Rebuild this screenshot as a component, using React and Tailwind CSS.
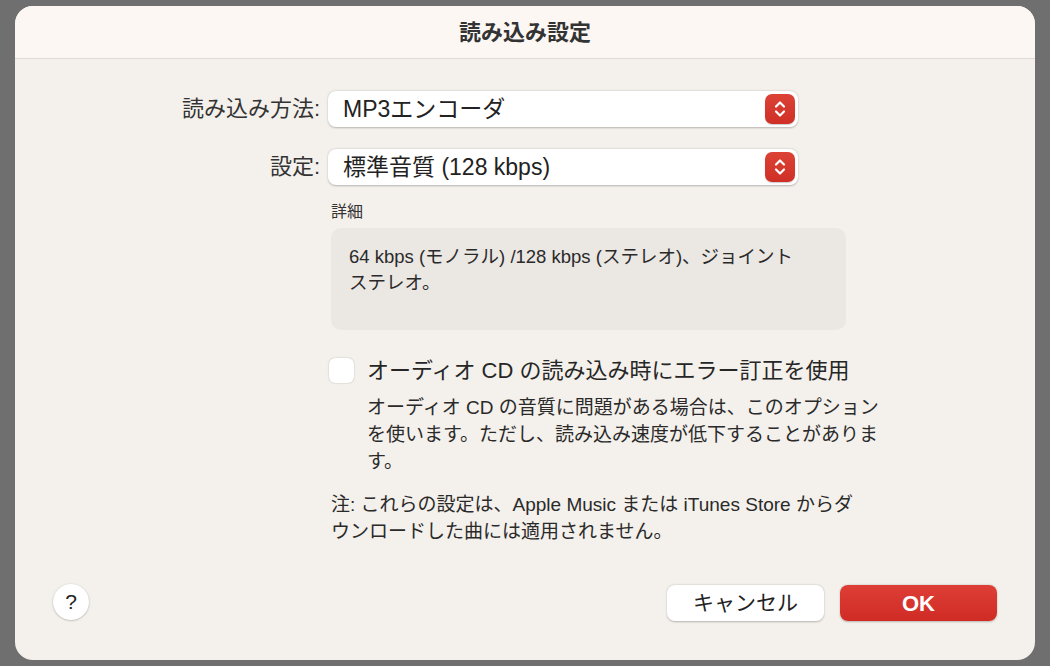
import React from "react";

const font = { fontFamily: '"Liberation Sans", "Noto Sans CJK JP", sans-serif' };

function Stepper() {
    return (
        <div className="w-[30px] h-[30px] rounded-[7px] bg-gradient-to-b from-[#dc4236] to-[#cf2f26] flex items-center justify-center shadow-[0_1px_1px_rgba(0,0,0,0.2)]">
            <svg width="14" height="20" viewBox="0 0 14 20" fill="none" stroke="white" strokeWidth="2.2" strokeLinecap="round" strokeLinejoin="round">
                <path d="M3 7.5 L7 3.5 L11 7.5" />
                <path d="M3 12.5 L7 16.5 L11 12.5" />
            </svg>
        </div>
    );
}

function SelectRow({ label, value }) {
    return (
        <div className="flex items-center">
            <div className="w-[313px] text-right pr-[8px] text-[22px] text-[#333] leading-none">{label}</div>
            <div className="w-[470px] h-[36px] bg-white rounded-[8px] shadow-[0_0.5px_2px_rgba(0,0,0,0.25)] flex items-center justify-between pl-[15px] pr-[3px]">
                <span className="text-[23px] text-[#222] leading-none">{value}</span>
                <Stepper />
            </div>
        </div>
    );
}

export default function App() {
    return (
        <div className="w-[1050px] h-[666px] bg-[#6f6f6f] pt-[6px] pl-[15px] overflow-hidden" style={font}>
            <div className="w-[1020px] h-[654px] rounded-[18px] overflow-hidden bg-[#f4f0eb] flex flex-col">
                {/* Title bar */}
                <div className="h-[53px] bg-[#fcf7f3] border-b border-[#dedad5] flex items-center justify-center">
                    <span className="text-[22px] font-bold text-[#333] pt-[1px]">読み込み設定</span>
                </div>

                {/* Body */}
                <div className="flex-1 flex flex-col pt-[32px] relative">
                    <SelectRow label="読み込み方法:" value="MP3エンコーダ" />
                    <div className="h-[22px]" />
                    <SelectRow label="設定:" value="標準音質 (128 kbps)" />

                    <div className="pl-[316px] mt-[19px]">
                        <div className="text-[16px] text-[#333] leading-none">詳細</div>
                        <div className="mt-[8px] w-[515px] h-[102px] rounded-[10px] bg-[#ebe7e3] pl-[18px] pt-[16px] text-[18.5px] leading-[26px] text-[#2a2a2a] whitespace-nowrap">
                            64 kbps (モノラル) /128 kbps (ステレオ)、ジョイント<br />ステレオ。
                        </div>
                    </div>

                    <div className="pl-[314px] mt-[28px] flex items-center">
                        <div className="w-[25px] h-[25px] rounded-[6px] bg-white shadow-[0_0_1.5px_rgba(0,0,0,0.3)]" />
                        <span className="ml-[13px] text-[22px] leading-none text-[#262626]">オーディオ CD の読み込み時にエラー訂正を使用</span>
                    </div>
                    <div className="pl-[352px] mt-[11px] text-[19px] leading-[27px] text-[#2a2a2a] whitespace-nowrap">
                        オーディオ CD の音質に問題がある場合は、このオプション<br />
                        を使います。ただし、読み込み速度が低下することがありま<br />
                        す。
                    </div>
                    <div className="pl-[316px] mt-[16px] text-[19px] leading-[27px] text-[#2a2a2a] whitespace-nowrap">
                        注: これらの設定は、Apple Music または iTunes Store からダ<br />
                        ウンロードした曲には適用されません。
                    </div>

                    {/* Footer */}
                    <div className="mt-auto mb-[38px] flex items-center pl-[38px] pr-[38px]">
                        <div className="w-[36px] h-[36px] rounded-full bg-white shadow-[0_0.5px_2px_rgba(0,0,0,0.3)] flex items-center justify-center text-[21px] text-[#222] mb-[2px]">?</div>
                        <div className="flex-1" />
                        <button className="w-[157px] h-[36px] rounded-[8px] bg-white shadow-[0_0.5px_2px_rgba(0,0,0,0.25)] text-[21px] text-[#222]">キャンセル</button>
                        <button className="ml-[16px] w-[157px] h-[36px] rounded-[8px] bg-gradient-to-b from-[#dd3e36] to-[#d02b25] shadow-[0_0.5px_2px_rgba(0,0,0,0.25)] text-[22px] font-bold text-white">OK</button>
                    </div>
                </div>
            </div>
        </div>
    );
}
